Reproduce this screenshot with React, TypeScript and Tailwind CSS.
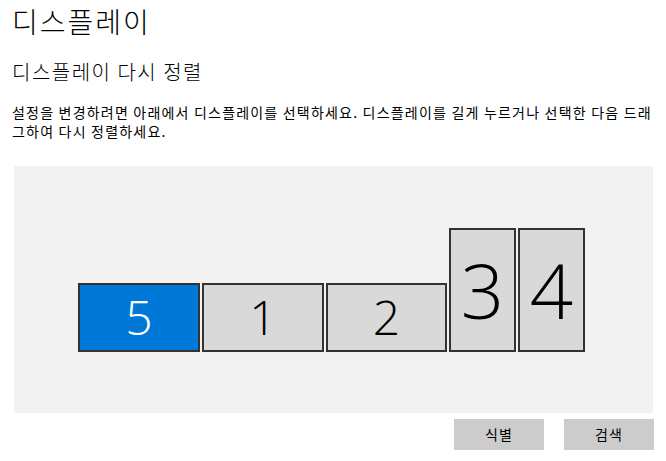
import React from "react";

const cjk = { fontFamily: '"Noto Sans CJK KR", "Noto Sans", sans-serif' };
const digitFont = { fontFamily: '"Open Sans", "Noto Sans", sans-serif' };

function Box({ n, w, h, selected, big }: { n: string; w: string; h: string; selected?: boolean; big?: boolean }) {
  return (
    <div
      className={`${w} ${h} border-2 border-[#333333] flex items-center justify-center ${selected ? "bg-[#0078d7] text-white" : "bg-[#d9d9d9] text-black"}`}
    >
      <span style={digitFont} className={`${big ? "text-[76px]" : "text-[48px]"} font-light leading-none`}>
        {n}
      </span>
    </div>
  );
}

export default function App() {
  return (
    <div className="w-[666px] h-[461px] bg-white overflow-hidden text-black" style={cjk}>
      <div className="pl-[12px]">
        <h1 className="text-[28px] leading-[36px] pt-[3px] font-light tracking-[2px]">디스플레이</h1>
        <h2 className="text-[20px] leading-[28px] mt-[19px] font-light tracking-[1.5px]">디스플레이 다시 정렬</h2>
        <p className="text-[14px] leading-[19px] mt-[17px] whitespace-nowrap tracking-[1.2px]">
          설정을 변경하려면 아래에서 디스플레이를 선택하세요. 디스플레이를 길게 누르거나 선택한 다음 드래
          <br />
          그하여 다시 정렬하세요.
        </p>
      </div>
      <div className="ml-[14px] mt-[25px] w-[639px] h-[247px] bg-[#f2f2f2] flex items-center justify-center">
        <div className="flex items-end gap-[2px] ml-[-4px]">
          <Box n="5" w="w-[122px]" h="h-[69px]" selected />
          <Box n="1" w="w-[122px]" h="h-[69px]" />
          <Box n="2" w="w-[121px]" h="h-[69px]" />
          <Box n="3" w="w-[67px]" h="h-[124px]" big />
          <Box n="4" w="w-[67px]" h="h-[124px]" big />
        </div>
      </div>
      <div className="flex justify-end gap-[20px] w-[654px] mt-[6px]">
        <button className="w-[90px] h-[31px] bg-[#cccccc] text-[14px] tracking-[1px]">식별</button>
        <button className="w-[90px] h-[31px] bg-[#cccccc] text-[14px] tracking-[1px]">검색</button>
      </div>
    </div>
  );
}
